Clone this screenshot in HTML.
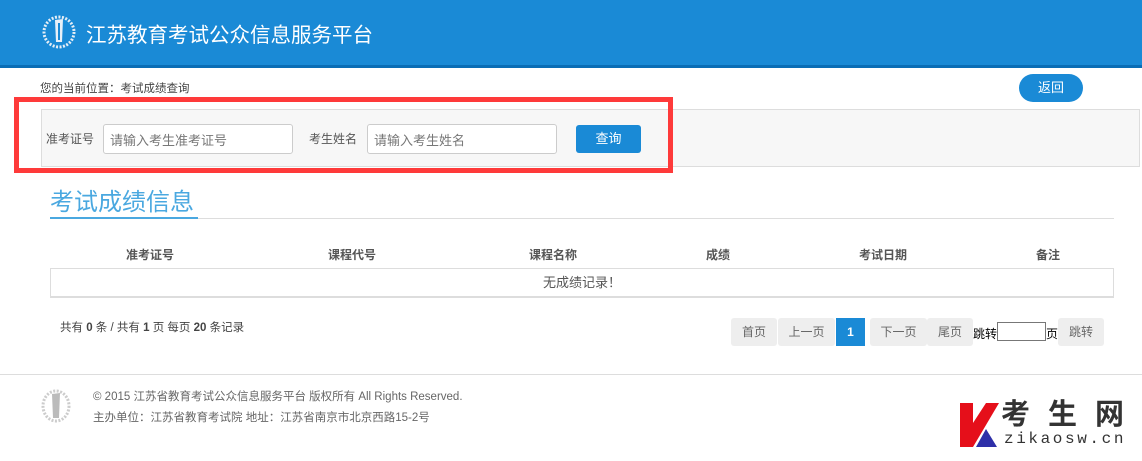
<!DOCTYPE html>
<html><head><meta charset="utf-8"><style>
*{margin:0;padding:0;box-sizing:border-box}
body{width:1142px;height:461px;background:#fff;position:relative;overflow:hidden;font-family:"Liberation Sans","Noto Sans CJK SC",sans-serif;color:#555}
.a{position:absolute}
.hd{left:0;top:0;width:1142px;height:68px;background:#1a8ad6;border-bottom:3px solid #0a6db5}
.ttl{left:86px;top:18px;font-size:20.5px;color:#fff}
.panel{left:41px;top:109px;width:1099px;height:58px;background:#f7f7f7;border:1px solid #ddd}
.red{left:14px;top:97px;width:659px;height:76px;border:5px solid #fe3a3a}
.inp{height:30px;background:#fff;border:1px solid #ccc;border-radius:3px;font-size:13px;color:#777;padding:5px 6px}
.btn{background:#1a8ad6;color:#fff;font-size:13px;text-align:center;border-radius:3px}
.th{top:246px;font-size:12px;font-weight:bold;color:#555;width:120px;text-align:center}
.pg{top:318px;height:28px;background:#eee;font-size:12px;color:#666;text-align:center;line-height:28px;border-radius:3px}
</style></head><body>
<div class="a hd"></div>
<svg class="a" style="left:41px;top:14px" width="36" height="36" viewBox="0 0 36 36"><circle cx="18" cy="18" r="15" fill="none" stroke="#e5eef6" stroke-width="3" stroke-dasharray="2 1.5"/><path d="M14 6 L22 5 L21 28 L15 28 Z" fill="#e8f0f8"/><path d="M17 9 L19 9 L19 26 L17 26Z" fill="#1a8ad6"/></svg>
<div class="a ttl">江苏教育考试公众信息服务平台</div>
<div class="a" style="left:40px;top:80px;font-size:11.5px;color:#444">您的当前位置：考试成绩查询</div>
<div class="a btn" style="left:1019px;top:74px;width:64px;height:28px;border-radius:14px;line-height:28px">返回</div>
<div class="a panel"></div>
<div class="a red"></div>
<div class="a" style="left:46px;top:130px;font-size:12px">准考证号</div>
<div class="a inp" style="left:103px;top:124px;width:190px">请输入考生准考证号</div>
<div class="a" style="left:309px;top:130px;font-size:12px">考生姓名</div>
<div class="a inp" style="left:367px;top:124px;width:190px">请输入考生姓名</div>
<div class="a btn" style="left:576px;top:125px;width:65px;height:28px;line-height:28px">查询</div>
<div class="a" style="left:50px;top:182px;font-size:24px;color:#4aa8e0">考试成绩信息</div>
<div class="a" style="left:50px;top:218px;width:1064px;height:1px;background:#ddd"></div>
<div class="a" style="left:50px;top:217px;width:148px;height:2px;background:#4aa8e0"></div>
<div class="a th" style="left:90px">准考证号</div>
<div class="a th" style="left:292px">课程代号</div>
<div class="a th" style="left:493px">课程名称</div>
<div class="a th" style="left:658px">成绩</div>
<div class="a th" style="left:823px">考试日期</div>
<div class="a th" style="left:988px">备注</div>
<div class="a" style="left:50px;top:268px;width:1064px;height:30px;border:1px solid #ddd;border-bottom:2px solid #ddd;text-align:center;font-size:13px;line-height:28px;color:#555">无成绩记录！</div>
<div class="a" style="left:60px;top:319px;font-size:11.5px;color:#444">共有 <b>0</b> 条 / 共有 <b>1</b> 页 每页 <b>20</b> 条记录</div>
<div class="a pg" style="left:731px;width:46px">首页</div>
<div class="a pg" style="left:778px;width:57px">上一页</div>
<div class="a pg" style="left:836px;width:29px;background:#1a8ad6;color:#fff;border-radius:0;font-weight:bold">1</div>
<div class="a pg" style="left:870px;width:57px">下一页</div>
<div class="a pg" style="left:927px;width:46px">尾页</div>
<div class="a" style="left:973px;top:325px;font-size:12px;color:#000">跳转</div>
<div class="a" style="left:997px;top:322px;width:49px;height:19px;border:1px solid #777"></div>
<div class="a" style="left:1046px;top:325px;font-size:12px;color:#000">页</div>
<div class="a pg" style="left:1058px;width:46px">跳转</div>
<div class="a" style="left:0;top:374px;width:1142px;height:1px;background:#ddd"></div>
<svg class="a" style="left:40px;top:388px" width="32" height="36" viewBox="0 0 32 36"><ellipse cx="16" cy="18" rx="13" ry="15" fill="none" stroke="#ccc" stroke-width="3" stroke-dasharray="2 1.5"/><path d="M12 6 L20 5 L19 30 L13 30Z" fill="#bbb"/></svg>
<div class="a" style="left:93px;top:388px;font-size:11.5px;color:#666">© 2015 江苏省教育考试公众信息服务平台 版权所有 All Rights Reserved.</div>
<div class="a" style="left:93px;top:409px;font-size:11.5px;color:#666">主办单位：江苏省教育考试院 地址：江苏省南京市北京西路15-2号</div>
<svg class="a" style="left:960px;top:403px" width="40" height="44" viewBox="0 0 40 44"><path d="M0 0 L13 0 L13 20 L26 0 L39 0 L13 44 L0 44Z" fill="#e50f1a"/><path d="M16 44 L26 26 L37 44Z" fill="#2e2fa8"/></svg>
<div class="a" style="left:1001px;top:392px;font-size:29px;line-height:40px;font-weight:bold;color:#333;letter-spacing:18px;font-family:'Noto Sans CJK SC',sans-serif;white-space:nowrap">考生网</div>
<div class="a" style="left:1004px;top:430px;font-size:16px;line-height:18px;color:#333;letter-spacing:2.6px;font-family:'Liberation Mono',monospace;white-space:nowrap">zikaosw.cn</div>
</body></html>
